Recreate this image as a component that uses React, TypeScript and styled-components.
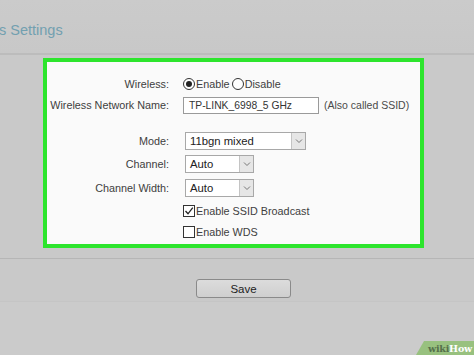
import React from "react";
import styled, { createGlobalStyle } from "styled-components";

const Global = createGlobalStyle`
  html, body { margin: 0; padding: 0; }
  body {
    width: 474px;
    height: 355px;
    overflow: hidden;
    background: #c9c9c9;
    font-family: "Liberation Sans", Arial, sans-serif;
  }
`;

const Page = styled.div`
  position: relative;
  width: 474px;
  height: 355px;
  display: flex;
  flex-direction: column;
  background: #c9c9c9;
`;

const Header = styled.div`
  height: 53px;
  display: flex;
  align-items: center;
  padding-top: 7px;
  box-sizing: border-box;
  background: linear-gradient(#cbcbcb, #c8c8c8);
`;

const Title = styled.div`
  font-size: 14.5px;
  color: #72a0b0;
  margin-left: -1px;
`;

const Rule = styled.div<{ $h: number; $c: string }>`
  height: ${(p) => p.$h}px;
  background: ${(p) => p.$c};
`;

const Body = styled.div`
  padding: 3px 0 0 43px;
`;

const Box = styled.div`
  width: 381px;
  height: 190px;
  box-sizing: border-box;
  border: 4px solid #2de52d;
  background: #fafafa;
  display: flex;
  flex-direction: column;
  padding-top: 12px;
`;

const Row = styled.div<{ $h: number; $mt: number }>`
  display: grid;
  grid-template-columns: 122px auto;
  column-gap: 14px;
  align-items: center;
  height: ${(p) => p.$h}px;
  margin-top: ${(p) => p.$mt}px;
`;

const Label = styled.div`
  text-align: right;
  font-size: 10.8px;
  color: #404040;
  white-space: nowrap;
`;

const Value = styled.div`
  display: flex;
  align-items: center;
  font-size: 10.8px;
  color: #404040;
  white-space: nowrap;
`;

const Radio = styled.span<{ $on?: boolean }>`
  width: 10px;
  height: 10px;
  border: 1px solid #333;
  border-radius: 50%;
  display: inline-flex;
  align-items: center;
  justify-content: center;
  background: #fff;
  margin-right: 1px;
  &::after {
    content: "";
    width: 6px;
    height: 6px;
    border-radius: 50%;
    background: ${(p) => (p.$on ? "#222" : "transparent")};
  }
`;

const Gap = styled.span<{ $w: number }>`
  display: inline-block;
  width: ${(p) => p.$w}px;
`;

const TextInput = styled.div`
  width: 136px;
  height: 17px;
  box-sizing: border-box;
  border: 1px solid #9a9a9a;
  background: #fff;
  display: flex;
  align-items: center;
  padding-left: 5px;
  font-size: 10.3px;
  color: #333;
`;

const Note = styled.span`
  margin-left: 5px;
  font-size: 10.5px;
  color: #4a4a4a;
`;

const Select = styled.div<{ $w: number }>`
  width: ${(p) => p.$w}px;
  height: 18px;
  margin-left: 2px;
  box-sizing: border-box;
  border: 1px solid #a8a8a8;
  background: #fff;
  display: flex;
  align-items: stretch;
  font-size: 11.3px;
  color: #222;
`;

const SelectText = styled.div`
  flex: 1;
  display: flex;
  align-items: center;
  padding-left: 4px;
`;

const Arrow = styled.div`
  width: 13px;
  background: #e6e6e6;
  border-left: 1px solid #c4c4c4;
  display: flex;
  align-items: center;
  justify-content: center;
`;

const Check = styled.span`
  width: 10px;
  height: 10px;
  border: 1px solid #333;
  background: #fff;
  display: inline-flex;
  align-items: center;
  justify-content: center;
  margin-right: 1px;
`;

const Footer = styled.div`
  display: flex;
  justify-content: flex-start;
  padding: 20px 0 0 196px;
  height: 42px;
  box-sizing: border-box;
`;

const SaveButton = styled.div`
  width: 95px;
  height: 19px;
  box-sizing: border-box;
  border: 1px solid #8a8a8a;
  border-radius: 3px;
  background: linear-gradient(#dcdcdc, #cfcfcf);
  display: flex;
  align-items: center;
  justify-content: center;
  font-size: 11.5px;
  color: #222;
`;

const Bottom = styled.div`
  flex: 1;
  background: #cbcbcb;
  border-top: 1px solid #c5c5c5;
`;

const Logo = styled.div`
  position: absolute;
  right: 0;
  bottom: 0;
  width: 58px;
  height: 14px;
  background: #98c17f;
  clip-path: polygon(8px 0, 100% 0, 100% 100%, 0 100%);
  display: flex;
  align-items: center;
  justify-content: flex-end;
  padding-right: 2px;
  box-sizing: border-box;
  font-family: "DejaVu Serif", "Liberation Serif", serif;
  font-weight: bold;
  font-size: 9.5px;
  letter-spacing: -0.2px;
`;

const Wiki = styled.span`
  color: #55704b;
`;

const How = styled.span`
  color: #ffffff;
`;

const Chevron = () => (
  <svg width="8" height="6" viewBox="0 0 8 6">
    <path d="M1 1.5 L4 4.5 L7 1.5" fill="none" stroke="#777" strokeWidth="1" />
  </svg>
);

const Tick = () => (
  <svg width="10" height="10" viewBox="0 0 10 10">
    <path d="M1.5 5 L4 7.8 L8.8 1.6" fill="none" stroke="#222" strokeWidth="1.3" />
  </svg>
);

export default function App() {
  return (
    <>
      <Global />
      <Page>
        <Header>
          <Title>s Settings</Title>
        </Header>
        <Rule $h={2} $c="#bcbcbc" />
        <Body>
          <Box>
            <Row $h={20} $mt={0}>
              <Label>Wireless:</Label>
              <Value>
                <Radio $on />
                Enable
                <Gap $w={2} />
                <Radio />
                Disable
              </Value>
            </Row>
            <Row $h={18} $mt={2}>
              <Label>Wireless Network Name:</Label>
              <Value>
                <TextInput>TP-LINK_6998_5 GHz</TextInput>
                <Note>(Also called SSID)</Note>
              </Value>
            </Row>
            <Row $h={18} $mt={18}>
              <Label>Mode:</Label>
              <Value>
                <Select $w={121}>
                  <SelectText>11bgn mixed</SelectText>
                  <Arrow>
                    <Chevron />
                  </Arrow>
                </Select>
              </Value>
            </Row>
            <Row $h={18} $mt={5}>
              <Label>Channel:</Label>
              <Value>
                <Select $w={69}>
                  <SelectText>Auto</SelectText>
                  <Arrow>
                    <Chevron />
                  </Arrow>
                </Select>
              </Value>
            </Row>
            <Row $h={18} $mt={6}>
              <Label>Channel Width:</Label>
              <Value>
                <Select $w={69}>
                  <SelectText>Auto</SelectText>
                  <Arrow>
                    <Chevron />
                  </Arrow>
                </Select>
              </Value>
            </Row>
            <Row $h={14} $mt={7}>
              <Label />
              <Value>
                <Check>
                  <Tick />
                </Check>
                Enable SSID Broadcast
              </Value>
            </Row>
            <Row $h={14} $mt={7}>
              <Label />
              <Value>
                <Check />
                Enable WDS
              </Value>
            </Row>
          </Box>
        </Body>
        <Rule $h={10} $c="transparent" />
        <Rule $h={1} $c="#b6b6b6" />
        <Footer>
          <SaveButton>Save</SaveButton>
        </Footer>
        <Bottom />
        <Logo>
          <Wiki>wiki</Wiki>
          <How>How</How>
        </Logo>
      </Page>
    </>
  );
}
